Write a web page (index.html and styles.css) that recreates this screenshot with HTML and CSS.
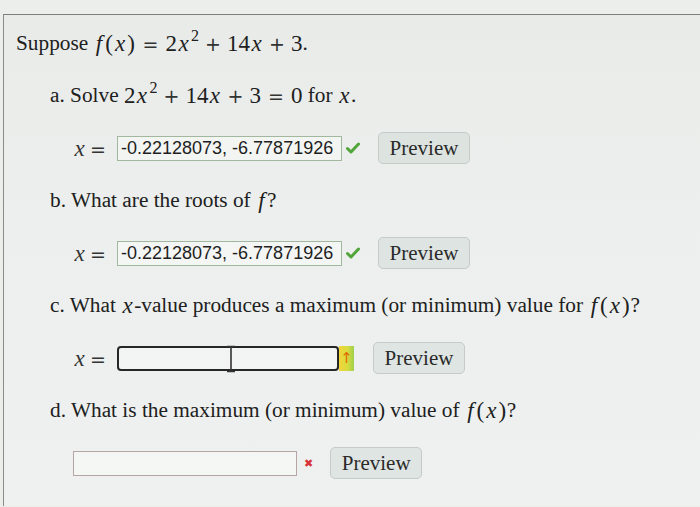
FILE: index.html
```html
<!DOCTYPE html>
<html>
<head>
<meta charset="utf-8">
<link rel="stylesheet" href="styles.css">
</head>
<body>
<div class="frame">
  <div class="problem">
    <div class="line title">Suppose&nbsp;<span class="m"><i class="f">f</i><span class="p">(</span><i class="x">x</i><span class="p">)</span><span class="rel">=</span>2<i class="x">x</i><sup>2</sup><span class="bin">+</span>14<i class="x">x</i><span class="bin">+</span>3</span>.</div>

    <div class="line part">a. Solve&nbsp;<span class="m">2<i class="x">x</i><sup>2</sup><span class="bin">+</span>14<i class="x">x</i><span class="bin">+</span>3<span class="rel">=</span>0</span>&nbsp;for&nbsp;<span class="m"><i class="x">x</i></span>.</div>

    <div class="line answer">
      <span class="label m"><i class="x">x</i><span class="rel">=</span></span>
      <input class="box ok" type="text" value="-0.22128073, -6.77871926" readonly>
      <svg class="check" viewBox="0 0 14 12" width="14" height="12"><path d="M1.5 6.5 L5 10 L12.5 2" fill="none" stroke="#52a53a" stroke-width="3" stroke-linecap="round" stroke-linejoin="round"/></svg>
      <button class="preview">Preview</button>
    </div>

    <div class="line part">b. What are the roots of&nbsp;<span class="m"><i class="f">f</i></span>?</div>

    <div class="line answer">
      <span class="label m"><i class="x">x</i><span class="rel">=</span></span>
      <input class="box ok" type="text" value="-0.22128073, -6.77871926" readonly>
      <svg class="check" viewBox="0 0 14 12" width="14" height="12"><path d="M1.5 6.5 L5 10 L12.5 2" fill="none" stroke="#52a53a" stroke-width="3" stroke-linecap="round" stroke-linejoin="round"/></svg>
      <button class="preview">Preview</button>
    </div>

    <div class="line part">c. What&nbsp;<span class="m"><i class="x">x</i></span>-value produces a maximum (or minimum) value for&nbsp;<span class="m"><i class="f">f</i><span class="p">(</span><i class="x">x</i><span class="p">)</span></span>?</div>

    <div class="line answer">
      <span class="label m"><i class="x">x</i><span class="rel">=</span></span>
      <span class="focuswrap">
        <input class="box focus" type="text" value="" readonly>
        <svg class="ibeam" viewBox="0 0 10 28" width="10" height="28"><path d="M1 1.5 H9 M5 1.5 V26.5 M1 26.5 H9" fill="none" stroke="#333" stroke-width="1.6"/></svg>
      </span>
      <span class="tip">&#8593;</span>
      <button class="preview">Preview</button>
    </div>

    <div class="line part">d. What is the maximum (or minimum) value of&nbsp;<span class="m"><i class="f">f</i><span class="p">(</span><i class="x">x</i><span class="p">)</span></span>?</div>

    <div class="line answer">
      <input class="box bad" type="text" value="" readonly>
      <span class="cross">&#10006;</span>
      <button class="preview">Preview</button>
    </div>
  </div>
</div>
</body>
</html>
```

FILE: styles.css
```css
html, body {
  margin: 0;
  padding: 0;
  background: #eceeec;
}
body {
  width: 700px;
  height: 507px;
  overflow: hidden;
  font-family: "Liberation Serif", "Times New Roman", serif;
  font-size: 21.3px;
  color: #202020;
}
.frame {
  margin-top: 14px;
  margin-left: 3px;
  border-top: 1px solid #7d7f7e;
  border-left: 1px solid #8a8c8b;
  height: 492px;
  box-sizing: border-box;
  overflow: hidden;
  background: linear-gradient(180deg, #e9ebe9 0%, #ecefed 40%, #eff1f0 100%);
}
.problem {
  display: flex;
  flex-direction: column;
  gap: 16.5px;
  padding: 10px 0 0 12px;
}
.line {
  height: 36px;
  display: flex;
  align-items: center;
  white-space: nowrap;
}
.part {
  padding-left: 34px;
}
.answer {
  padding-left: 57px;
}
.m {
  display: inline-flex;
  align-items: baseline;
  font-size: 23px;
  line-height: 1;
}
.m i {
  font-style: italic;
  display: inline-block;
  text-align: center;
}
.m i.x {
  width: 13px;
}
.m i.f {
  width: 11px;
}
.m .p {
  display: inline-block;
  width: 9px;
  text-align: center;
}
.m sup {
  font-size: 16px;
  position: relative;
  top: -10px;
  margin-left: 1px;
  line-height: 0;
}
.rel, .bin {
  display: inline-block;
  width: 18px;
  text-align: center;
  font-family: "DejaVu Sans", sans-serif;
  font-size: 19px;
  color: #333;
}
.rel {
  margin: 0 6px;
}
.bin {
  margin: 0 5px;
}
.label {
  width: 44px;
  color: #333;
}
.label .rel {
  margin: 0 0 0 3px;
}
.box {
  box-sizing: border-box;
  height: 25px;
  width: 225px;
  margin: 0;
  padding: 0 3px;
  font-family: "Liberation Sans", Arial, sans-serif;
  font-size: 18px;
  color: #1e1e1e;
  background: rgba(250, 251, 250, 0.55);
  border: 1px solid #a2b89e;
  border-radius: 0;
  outline: none;
}
.check {
  margin-left: 4px;
  flex: none;
}
.preview {
  box-sizing: border-box;
  width: 92px;
  height: 32px;
  margin-left: 18px;
  padding: 0;
  font-family: "Liberation Serif", "Times New Roman", serif;
  font-size: 21px;
  color: #2a2a2a;
  background: rgba(205, 214, 210, 0.45);
  border: 1px solid #c4cbc8;
  border-radius: 5px;
}
.focuswrap {
  position: relative;
  display: inline-flex;
}
.box.focus {
  width: 222px;
  border: 2px solid #262626;
  border-radius: 4px;
  background: rgba(250, 251, 250, 0.4);
}
.ibeam {
  position: absolute;
  left: 109px;
  top: -1px;
}
.tip {
  box-sizing: border-box;
  width: 15px;
  height: 25px;
  display: inline-flex;
  align-items: center;
  justify-content: center;
  font-family: "DejaVu Sans", sans-serif;
  font-size: 15px;
  color: #e06a00;
  background: linear-gradient(90deg, #f3d43a 0%, #d9dc3e 55%, #9fd04c 100%);
}
.tip + .preview {
  margin-left: 19px;
}
.answer .box.bad {
  width: 224px;
  border: 1px solid #b7a5a6;
}
.cross {
  margin-left: 7px;
  font-family: "DejaVu Sans", sans-serif;
  font-size: 11px;
  color: #d8323a;
}
.cross + .preview {
  margin-left: 17px;
}
```
